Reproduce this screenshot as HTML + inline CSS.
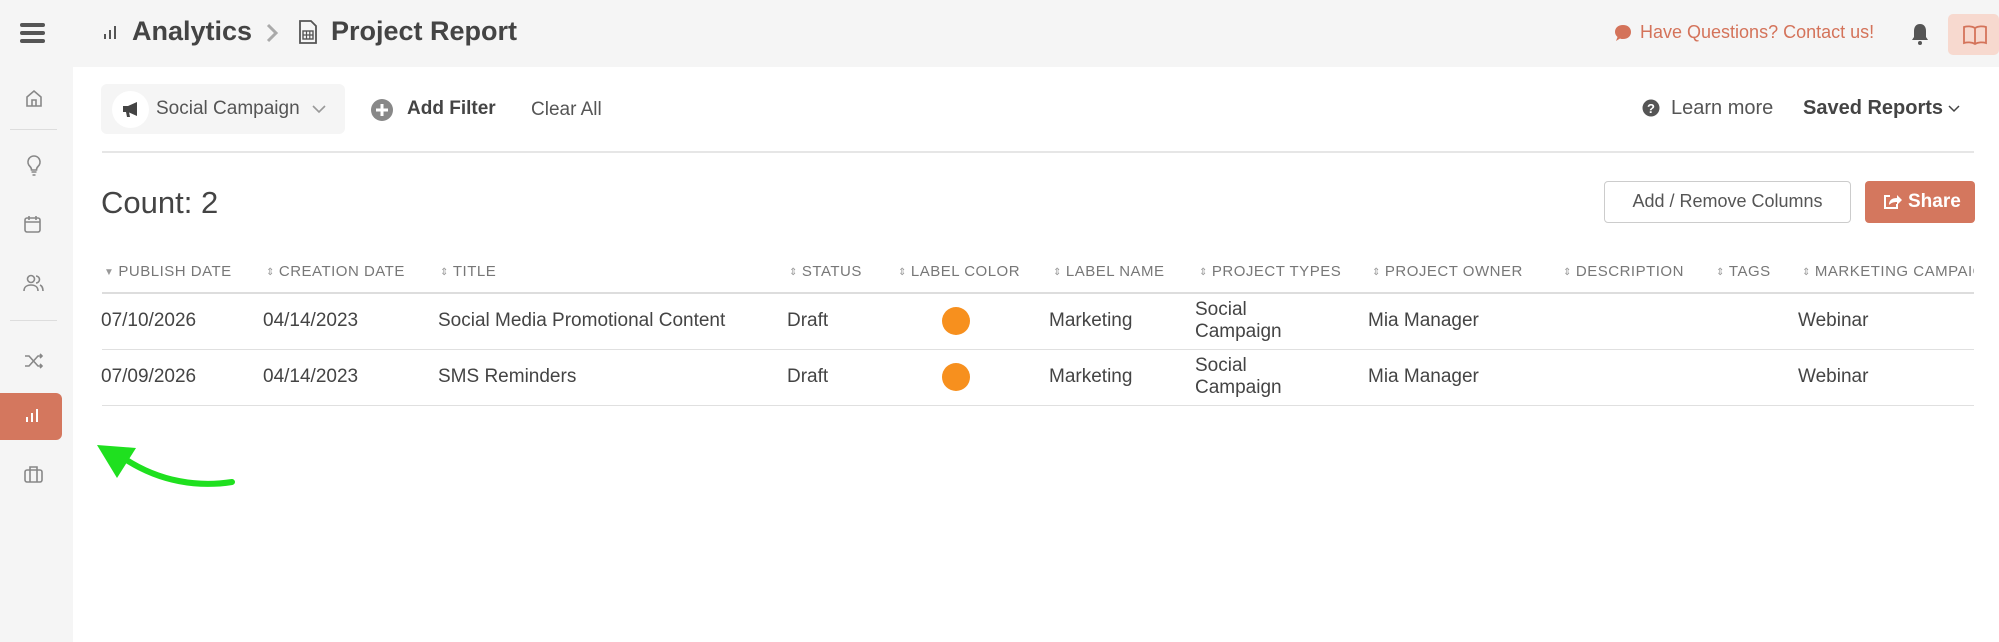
<!DOCTYPE html>
<html><head><meta charset="utf-8"><style>
*{box-sizing:border-box;margin:0;padding:0}
body{width:1999px;height:642px;overflow:hidden;background:#fff;font-family:"Liberation Sans",sans-serif;color:#444;position:relative}
.a{position:absolute;white-space:nowrap}
.hdr{left:0;top:0;width:1999px;height:67px;background:#f5f5f5}
.side{left:0;top:0;width:73px;height:642px;background:#f5f5f5}
.th{font-size:15px;color:#777;top:263px;letter-spacing:.5px}
.th i{font-style:normal;font-size:10px;margin-right:4px;vertical-align:1px;color:#999}
.td{font-size:19px;color:#444}
.line{position:absolute;left:102px;width:1872px;height:1px;background:#e0e0e0}
.ic{position:absolute;stroke:#888;fill:none;stroke-width:1.6}
</style></head><body>
<div class="a hdr"></div>
<div class="a side"></div>
<div class="a" style="left:20px;top:23px;width:25px;height:4px;background:#555;border-radius:2px"></div>
<div class="a" style="left:20px;top:31px;width:25px;height:4px;background:#555;border-radius:2px"></div>
<div class="a" style="left:20px;top:39px;width:25px;height:4px;background:#555;border-radius:2px"></div>
<svg class="a" style="left:103px;top:24px" width="14" height="16"><rect x="1" y="10" width="2" height="5" fill="#555"/><rect x="6" y="6" width="2" height="9" fill="#555"/><rect x="11" y="2" width="2" height="13" fill="#555"/></svg>
<div class="a" style="left:132px;top:16px;font-size:27px;font-weight:bold;color:#444">Analytics</div>
<svg class="a" style="left:265px;top:22px" width="14" height="22"><path d="M3 3l8 8-8 8" fill="none" stroke="#aaa" stroke-width="3"/></svg>
<svg class="a" style="left:298px;top:20px" width="20" height="24"><path d="M2 1h11l5 5v17H2z" fill="none" stroke="#555" stroke-width="1.8"/><rect x="5" y="11" width="10" height="8" fill="none" stroke="#555" stroke-width="1.4"/><path d="M5 15h10M8.5 11v8M11.8 11v8" stroke="#555" stroke-width="1.2"/></svg>
<div class="a" style="left:331px;top:16px;font-size:27px;font-weight:bold;color:#444">Project Report</div>
<svg class="a" style="left:1613px;top:23px" width="20" height="20"><path d="M10 2c5 0 8 3 8 7s-3 7-8 7c-1 0-2 0-3-.5L3 18l1.5-4C3 12.5 2 11 2 9c0-4 3-7 8-7z" fill="#d4735a"/></svg>
<div class="a" style="left:1640px;top:22px;font-size:18px;color:#d4735a">Have Questions? Contact us!</div>
<svg class="a" style="left:1911px;top:22px" width="18" height="24"><path d="M9 2c-4 0-6 3-6 7v6l-2 3h16l-2-3V9c0-4-2-7-6-7z" fill="#555"/><circle cx="9" cy="21" r="2" fill="#555"/></svg>
<div class="a" style="left:1948px;top:14px;width:51px;height:41px;background:#f7d9cf;border-radius:5px"></div>
<svg class="a" style="left:1962px;top:24px" width="26" height="22"><path d="M13 4v16M13 4C10 2 5 2 2 3v16c3-1 8-1 11 1 3-2 8-2 11-1V3c-3-1-8-1-11 1z" fill="none" stroke="#d4735a" stroke-width="1.8"/></svg>
<svg class="ic" style="left:24px;top:88px" width="20" height="20"><path d="M3 9l7-6 7 6v9H3z M8 18v-6h4v6"/></svg>
<div class="a" style="left:10px;top:129px;width:47px;height:1px;background:#ddd"></div>
<svg class="ic" style="left:25px;top:154px" width="18" height="24"><path d="M9 2a6 6 0 0 0-4 10.5c1 1 1.5 2 1.5 3.5h5c0-1.5.5-2.5 1.5-3.5A6 6 0 0 0 9 2zM6.5 18h5M7.5 21h3"/></svg>
<svg class="ic" style="left:23px;top:214px" width="20" height="20"><rect x="2" y="4" width="15" height="14" rx="2"/><path d="M2 8h15M6 2v4M13 2v4"/></svg>
<svg class="ic" style="left:22px;top:272px" width="24" height="22"><circle cx="9" cy="7" r="3.5"/><path d="M2 19c0-4 3-6 7-6s7 2 7 6M14 4a3.5 3.5 0 0 1 0 7M18 13c2 1 3 3 3 6"/></svg>
<div class="a" style="left:10px;top:320px;width:47px;height:1px;background:#ddd"></div>
<svg class="ic" style="left:23px;top:352px" width="22" height="18"><path d="M2 4h4l9 10h4M2 14h4l9-10h4M17 2l2 2-2 2M17 12l2 2-2 2"/></svg>
<div class="a" style="left:0;top:393px;width:62px;height:47px;background:#d4775e;border-radius:0 6px 6px 0"></div>
<svg class="a" style="left:25px;top:407px" width="14" height="16"><rect x="1" y="10" width="2" height="5" fill="#fff"/><rect x="6" y="6" width="2" height="9" fill="#fff"/><rect x="11" y="2" width="2" height="13" fill="#fff"/></svg>
<svg class="ic" style="left:23px;top:464px" width="22" height="20"><rect x="2" y="6" width="17" height="12" rx="2"/><path d="M7 6V3h7v3M7 6v12M14 6v12"/></svg>
<svg class="a" style="left:90px;top:435px" width="150" height="60"><path d="M142 47C110 52 70 48 32 22" fill="none" stroke="#1fe01f" stroke-width="6" stroke-linecap="round"/><path d="M7 10L46 13L27 43Z" fill="#1fe01f"/></svg>
<div class="a" style="left:101px;top:84px;width:244px;height:50px;background:#f5f5f5;border-radius:6px"></div>
<div class="a" style="left:112px;top:91px;width:37px;height:37px;background:#fff;border-radius:50%"></div>
<svg class="a" style="left:121px;top:100px" width="20" height="18"><path d="M2 6h5l9-4v14l-9-4H2z" fill="#444"/><path d="M5 12l1 5h3l-1-5" fill="#444"/></svg>
<div class="a" style="left:156px;top:98px;font-size:19px;color:#555">Social Campaign</div>
<svg class="a" style="left:311px;top:104px" width="16" height="10"><path d="M2 2l6 6 6-6" fill="none" stroke="#999" stroke-width="1.6"/></svg>
<svg class="a" style="left:370px;top:98px" width="24" height="24"><circle cx="12" cy="12" r="11" fill="#888"/><path d="M12 6v12M6 12h12" stroke="#fff" stroke-width="3"/></svg>
<div class="a" style="left:407px;top:98px;font-size:19px;font-weight:bold;color:#444">Add Filter</div>
<div class="a" style="left:531px;top:99px;font-size:19px;color:#555">Clear All</div>
<svg class="a" style="left:1642px;top:99px" width="18" height="18"><circle cx="9" cy="9" r="8.5" fill="#555"/><text x="9" y="14" font-size="13" font-weight="bold" fill="#fff" text-anchor="middle" font-family="Liberation Sans">?</text></svg>
<div class="a" style="left:1671px;top:97px;font-size:20px;color:#555">Learn more</div>
<div class="a" style="left:1803px;top:97px;font-size:20px;font-weight:bold;color:#444">Saved Reports</div>
<svg class="a" style="left:1948px;top:105px" width="12" height="8"><path d="M1 1l5 5 5-5" fill="none" stroke="#444" stroke-width="1.5"/></svg>
<div class="a" style="left:102px;top:151px;width:1872px;height:2px;background:#e6e6e6"></div>
<div class="a" style="left:101px;top:185px;font-size:31px;color:#444">Count: 2</div>
<div class="a" style="left:1604px;top:181px;width:247px;height:42px;border:1.5px solid #ccc;border-radius:4px;background:#fff;font-size:18px;color:#555;text-align:center;line-height:39px">Add / Remove Columns</div>
<div class="a" style="left:1865px;top:181px;width:110px;height:42px;background:#d4775e;border-radius:4px"></div>
<svg class="a" style="left:1882px;top:193px" width="20" height="18"><path d="M8 3H3v12h12v-4" fill="none" stroke="#fff" stroke-width="2"/><path d="M7 12c0-5 3-7 8-7V2l5 5-5 5V9c-4 0-6 1-8 3z" fill="#fff"/></svg>
<div class="a" style="left:1908px;top:191px;font-size:19px;font-weight:bold;color:#fff">Share</div>
<div class="a th" style="left:104px"><i>▼</i>PUBLISH DATE</div>
<div class="a th" style="left:266px"><i>⇕</i>CREATION DATE</div>
<div class="a th" style="left:440px"><i>⇕</i>TITLE</div>
<div class="a th" style="left:789px"><i>⇕</i>STATUS</div>
<div class="a th" style="left:898px"><i>⇕</i>LABEL COLOR</div>
<div class="a th" style="left:1053px"><i>⇕</i>LABEL NAME</div>
<div class="a th" style="left:1199px"><i>⇕</i>PROJECT TYPES</div>
<div class="a th" style="left:1372px"><i>⇕</i>PROJECT OWNER</div>
<div class="a th" style="left:1563px"><i>⇕</i>DESCRIPTION</div>
<div class="a th" style="left:1716px"><i>⇕</i>TAGS</div>
<div class="a th" style="left:1802px;width:172px;overflow:hidden"><i>⇕</i>MARKETING CAMPAIGN</div>
<div class="line" style="top:292px;height:2px;background:#ddd"></div>
<div class="a td" style="left:101px;top:310px">07/10/2026</div>
<div class="a td" style="left:263px;top:310px">04/14/2023</div>
<div class="a td" style="left:438px;top:310px">Social Media Promotional Content</div>
<div class="a td" style="left:787px;top:310px">Draft</div>
<div class="a" style="left:942px;top:307px;width:28px;height:28px;border-radius:50%;background:#f7901e"></div>
<div class="a td" style="left:1049px;top:310px">Marketing</div>
<div class="a td" style="left:1195px;top:299px;line-height:22px">Social<br>Campaign</div>
<div class="a td" style="left:1368px;top:310px">Mia Manager</div>
<div class="a td" style="left:1798px;top:310px">Webinar</div>
<div class="line" style="top:349px"></div>
<div class="a td" style="left:101px;top:366px">07/09/2026</div>
<div class="a td" style="left:263px;top:366px">04/14/2023</div>
<div class="a td" style="left:438px;top:366px">SMS Reminders</div>
<div class="a td" style="left:787px;top:366px">Draft</div>
<div class="a" style="left:942px;top:363px;width:28px;height:28px;border-radius:50%;background:#f7901e"></div>
<div class="a td" style="left:1049px;top:366px">Marketing</div>
<div class="a td" style="left:1195px;top:355px;line-height:22px">Social<br>Campaign</div>
<div class="a td" style="left:1368px;top:366px">Mia Manager</div>
<div class="a td" style="left:1798px;top:366px">Webinar</div>
<div class="line" style="top:405px"></div>
</body></html>
